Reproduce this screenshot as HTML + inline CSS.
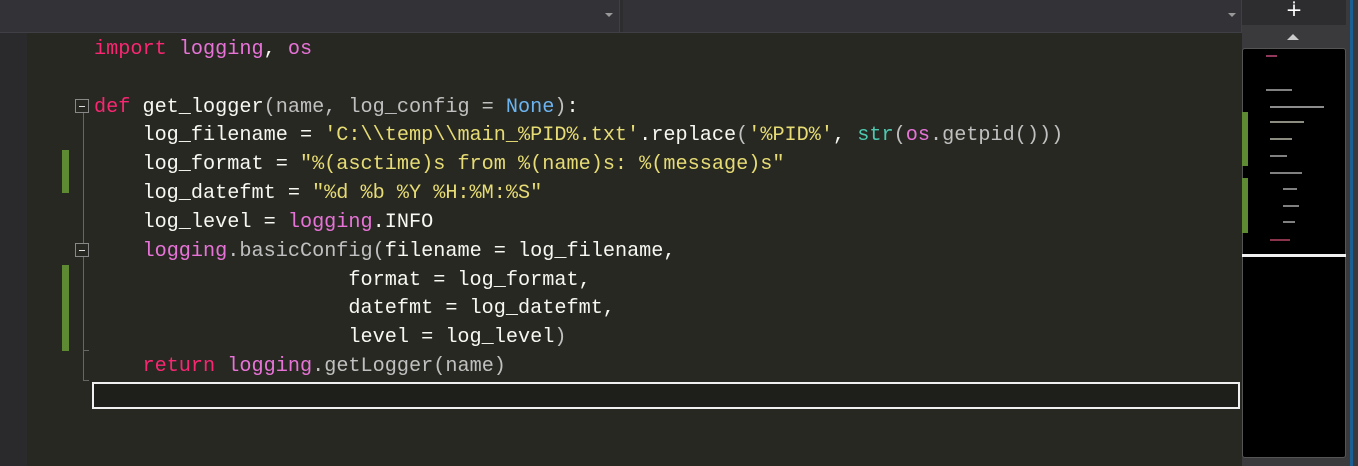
<!DOCTYPE html>
<html><head><meta charset="utf-8"><style>
*{margin:0;padding:0;box-sizing:border-box}
body{width:1358px;height:466px;background:#272822;position:relative;overflow:hidden;font-family:"Liberation Mono",monospace}
.top{position:absolute;left:0;top:0;width:1242px;height:33px;background:#2d2d30;border-bottom:1px solid #3f3f46}
.dd{position:absolute;top:0;height:32px;background:#333337;border-right:1px solid #3f3f46}
.arr{position:absolute;top:13px;width:0;height:0;border-left:4px solid transparent;border-right:4px solid transparent;border-top:4px solid #999}
.gut{position:absolute;left:0;top:33px;width:27px;height:433px;background:#2a2a2c}
.l{position:absolute;left:94px;font-size:20.2px;line-height:29px;height:29px;white-space:pre;color:#f8f8f2;letter-spacing:0}
.k{color:#f92672}.m{color:#e873d8}.s{color:#e6db74}.b{color:#6cb4f0}.c{color:#4ec9b0}.g{color:#c0c0c0}
.bar{position:absolute;left:62px;width:7px;background:#5f8a34}
.fold{position:absolute;left:75px;width:14px;height:14px;border:1px solid #888;}
.fold:after{content:"";position:absolute;left:3px;top:6px;width:6px;height:1px;background:#ddd}
.vl{position:absolute;left:83px;width:1px;background:#666}
</style></head><body>
<div class="top"></div>
<div class="dd" style="left:0;width:620px"></div><div class="arr" style="left:605px"></div>
<div class="dd" style="left:623px;width:619px"></div><div class="arr" style="left:1228px"></div>
<div class="gut"></div>
<div class="l" style="top:35px"><span class="k">import</span> <span class="m">logging</span>, <span class="m">os</span></div>
<div class="l" style="top:93px"><span class="k">def</span> get_logger<span class="g">(name, log_config = </span><span class="b">None</span><span class="g">)</span>:</div>
<div class="l" style="top:121px">    log_filename = <span class="s">'C:\\temp\\main_%PID%.txt'</span>.replace<span class="g">(</span><span class="s">'%PID%'</span>, <span class="c">str</span><span class="g">(</span><span class="m">os</span><span class="g">.getpid()))</span></div>
<div class="l" style="top:150px">    log_format = <span class="s">"%(asctime)s from %(name)s: %(message)s"</span></div>
<div class="l" style="top:179px">    log_datefmt = <span class="s">"%d %b %Y %H:%M:%S"</span></div>
<div class="l" style="top:208px">    log_level = <span class="m">logging</span>.INFO</div>
<div class="l" style="top:237px">    <span class="m">logging</span><span class="g">.basicConfig(</span>filename = log_filename,</div>
<div class="l" style="top:266px">                     format = log_format,</div>
<div class="l" style="top:294px">                     datefmt = log_datefmt,</div>
<div class="l" style="top:323px">                     level = log_level<span class="g">)</span></div>
<div class="l" style="top:352px">    <span class="k">return</span> <span class="m">logging</span><span class="g">.getLogger(name)</span></div>
<div style="position:absolute;left:92px;top:382px;width:1148px;height:27px;border:2px solid #f0f0f0;background:#1e1e1b"></div>
<div class="bar" style="top:150px;height:43px"></div>
<div class="bar" style="top:265px;height:86px"></div>
<div class="fold" style="top:99px"></div>
<div class="fold" style="top:243px"></div>
<div class="vl" style="top:113px;height:130px"></div>
<div class="vl" style="top:257px;height:124px"></div>
<div style="position:absolute;left:83px;top:350px;width:6px;height:1px;background:#666"></div>
<div style="position:absolute;left:83px;top:380px;width:6px;height:1px;background:#666"></div>
<div style="position:absolute;left:1242px;top:0;width:116px;height:466px;background:#3a3a3d"></div>
<div style="position:absolute;left:1242px;top:0;width:104px;height:25px;background:#2d2d30;color:#fff;font-size:20px;text-align:center;line-height:24px">∔</div>
<div style="position:absolute;left:1287px;top:34px;width:0;height:0;border-left:6px solid transparent;border-right:6px solid transparent;border-bottom:6px solid #ccc"></div>
<div style="position:absolute;left:1242px;top:48px;width:104px;height:410px;background:#000;border:1px solid #555;border-radius:3px"></div>
<div style="position:absolute;left:1242px;top:254px;width:104px;height:3px;background:#f0f0f0"></div>
<div style="position:absolute;left:1242px;top:112px;width:6px;height:54px;background:#5f8a34"></div>
<div style="position:absolute;left:1242px;top:178px;width:6px;height:55px;background:#5f8a34"></div>
<div style="position:absolute;left:1350px;top:0;width:3px;height:466px;background:#1c5f95"></div>
<svg style="position:absolute;left:1242px;top:48px" width="104" height="210">
<g stroke-width="1.5">
<line x1="24" y1="8" x2="35" y2="8" stroke="#c24a7a"/>
<line x1="24" y1="42" x2="50" y2="42" stroke="#aaa"/>
<line x1="28" y1="59" x2="82" y2="59" stroke="#bbb"/>
<line x1="28" y1="74" x2="62" y2="74" stroke="#bba"/>
<line x1="28" y1="91" x2="50" y2="91" stroke="#bba"/>
<line x1="28" y1="108" x2="45" y2="108" stroke="#aaa"/>
<line x1="28" y1="125" x2="60" y2="125" stroke="#aaa"/>
<line x1="41" y1="141" x2="55" y2="141" stroke="#aaa"/>
<line x1="41" y1="158" x2="57" y2="158" stroke="#aaa"/>
<line x1="41" y1="174" x2="53" y2="174" stroke="#aaa"/>
<line x1="28" y1="192" x2="48" y2="192" stroke="#b46"/>
</g></svg>
</body></html>
